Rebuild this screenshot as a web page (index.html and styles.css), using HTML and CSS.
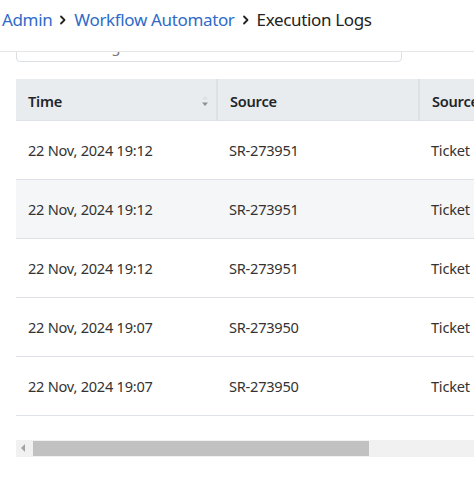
FILE: index.html
```html
<!DOCTYPE html>
<html lang="en">
<head>
<meta charset="utf-8">
<title>Execution Logs</title>
<link rel="stylesheet" href="styles.css">
</head>
<body>
<nav class="breadcrumb">
  <a class="crumb link" href="#">Admin</a>
  <svg class="chev" viewBox="0 0 10 10" width="10" height="10"><path d="M3 1.5 L6.5 5 L3 8.5" fill="none" stroke="#222" stroke-width="1.8" stroke-linecap="round" stroke-linejoin="round"/></svg>
  <a class="crumb link" href="#">Workflow Automator</a>
  <svg class="chev" viewBox="0 0 10 10" width="10" height="10"><path d="M3 1.5 L6.5 5 L3 8.5" fill="none" stroke="#222" stroke-width="1.8" stroke-linecap="round" stroke-linejoin="round"/></svg>
  <span class="crumb current">Execution Logs</span>
</nav>
<main class="content">
  <div class="search-clip">
    <div class="search-box"><span class="placeholder">Search logs</span></div>
  </div>
  <div class="table-wrap">
    <table class="logs">
      <colgroup>
        <col class="c-time"><col class="c-src"><col class="c-type"><col class="c-rest">
      </colgroup>
      <thead>
        <tr>
          <th class="sortable">Time
            <svg class="sort" viewBox="0 0 8 12" width="8" height="12"><path d="M4 1 L7 4.5 H1 Z" fill="#dcdfe3"/><path d="M4 11 L7 7.5 H1 Z" fill="#8c9196"/></svg>
          </th>
          <th>Source</th>
          <th>Source Type</th>
          <th>Status</th>
        </tr>
      </thead>
      <tbody>
        <tr><td>22 Nov, 2024 19:12</td><td>SR-273951</td><td>Ticket</td><td>Success</td></tr>
        <tr class="hover"><td>22 Nov, 2024 19:12</td><td>SR-273951</td><td>Ticket</td><td>Success</td></tr>
        <tr><td>22 Nov, 2024 19:12</td><td>SR-273951</td><td>Ticket</td><td>Success</td></tr>
        <tr><td>22 Nov, 2024 19:07</td><td>SR-273950</td><td>Ticket</td><td>Success</td></tr>
        <tr><td>22 Nov, 2024 19:07</td><td>SR-273950</td><td>Ticket</td><td>Success</td></tr>
      </tbody>
    </table>
  </div>
  <div class="hscroll">
    <div class="arrow"></div>
    <div class="thumb"></div>
  </div>
</main>
</body>
</html>
```
FILE: styles.css
```css
html, body {
  margin: 0;
  padding: 0;
  background: #fff;
}
body {
  font-family: "Noto Sans", "Open Sans", sans-serif;
  color: #333;
  width: 474px;
  overflow: hidden;
}
.breadcrumb {
  height: 39px;
  display: flex;
  align-items: center;
  gap: 6px;
  padding-left: 2px;
  font-size: 17px;
  letter-spacing: -0.35px;
  white-space: nowrap;
}
.crumb {
  text-decoration: none;
}
.link {
  color: #2f6bc8;
}
.current {
  color: #222;
}
.chev {
  flex: none;
  margin-top: 1px;
}
.content {
  margin-top: 12px;
  border-top: 1px solid #e6e6e6;
}
.search-clip {
  height: 10px;
  overflow: hidden;
  padding-left: 16px;
  width: 386px;
}
.search-box {
  margin-top: -28px;
  height: 36px;
  border: 1px solid #dcdfe3;
  border-radius: 4px;
  display: flex;
  align-items: center;
  padding: 5px 0 0 30px;
  box-sizing: content-box;
  font-size: 15px;
  color: #777;
}
.search-box {
  height: 31px;
}
.table-wrap {
  margin-top: 17px;
  margin-left: 16px;
  overflow: hidden;
}
.logs {
  border-collapse: collapse;
  table-layout: fixed;
  width: 800px;
  font-size: 14.6px;
  letter-spacing: -0.25px;
}
.c-time { width: 201px; }
.c-src { width: 202px; }
.c-type { width: 200px; }
.c-rest { width: 197px; }
.logs th {
  background: #e9ecef;
  height: 41px;
  padding: 3px 12px 0;
  text-align: left;
  font-weight: 600;
  color: #212529;
  border-left: 2px solid #dde1e5;
  border-bottom: 1px solid #dee2e6;
  white-space: nowrap;
  box-sizing: border-box;
}
.logs th:first-child {
  border-left: none;
}
.sortable {
  position: relative;
}
.sort {
  position: absolute;
  right: 7px;
  top: 16px;
}
.logs td {
  height: 59px;
  padding: 0 12px;
  border-bottom: 1px solid #dee2e6;
  white-space: nowrap;
  box-sizing: border-box;
  color: #333;
}
.logs tr.hover td {
  background: #f5f6f7;
}
.hscroll {
  margin: 24px 0 0 16px;
  height: 17px;
  background: #f1f1f1;
  display: flex;
  align-items: center;
}
.arrow {
  width: 0;
  height: 0;
  border-top: 4px solid transparent;
  border-bottom: 4px solid transparent;
  border-right: 4px solid #a3a3a3;
  margin-left: 5px;
}
.thumb {
  margin-left: 8px;
  width: 336px;
  height: 15px;
  background: #c1c1c1;
}
```
